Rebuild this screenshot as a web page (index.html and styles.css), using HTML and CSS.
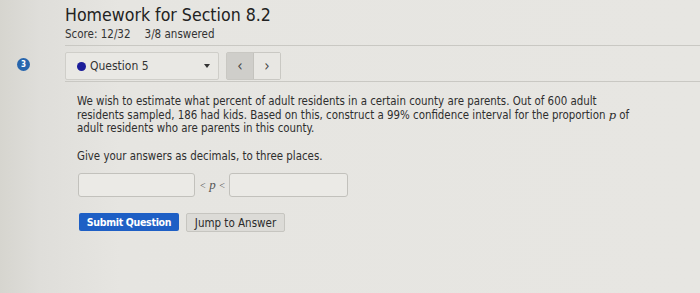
FILE: index.html
```html
<!DOCTYPE html>
<html>
<head>
<meta charset="utf-8">
<link rel="stylesheet" href="styles.css">
</head>
<body>
<div class="page">
  <header class="head">
    <h1 class="title">Homework for Section 8.2</h1>
    <div class="score"><span>Score: 12/32</span><span>3/8 answered</span></div>
  </header>
  <div class="qbar">
    <div class="gutter"><span class="badge">3</span></div>
    <div class="bar">
      <div class="select">
        <span class="dot"></span>
        <span class="qname">Question 5</span>
        <span class="caret"></span>
      </div>
      <div class="nav">
        <span class="navbtn prev">&lsaquo;</span>
        <span class="navbtn next">&rsaquo;</span>
      </div>
    </div>
  </div>
  <div class="question">
    <p class="text">We wish to estimate what percent of adult residents in a certain county are parents. Out of 600 adult<br>residents sampled, 186 had kids. Based on this, construct a 99% confidence interval for the proportion <i class="var">p</i> of<br>adult residents who are parents in this county.</p>
    <p class="text">Give your answers as decimals, to three places.</p>
    <div class="answers">
      <span class="box box1"></span>
      <span class="ineq">&lt; <i>p</i> &lt;</span>
      <span class="box box2"></span>
    </div>
    <div class="buttons">
      <span class="btn submit">Submit Question</span>
      <span class="btn jump">Jump to Answer</span>
    </div>
  </div>
</div>
</body>
</html>
```

FILE: styles.css
```css
html, body {
  margin: 0;
  height: 100%;
}
body {
  background: linear-gradient(to right, #d6d5cf 0px, #dfdeda 40px, #e6e5e1 120px, #e7e6e2 100%);
  font-family: "DejaVu Sans Condensed", "DejaVu Sans", sans-serif;
  color: #2b2b2b;
}
.page {
  width: 700px;
  height: 293px;
  overflow: hidden;
}
.head {
  padding-left: 65px;
  padding-top: 4px;
}
.title {
  margin: 0;
  font-size: 17.6px;
  font-weight: normal;
  line-height: 22px;
  color: #222;
}
.score {
  display: flex;
  gap: 14px;
  font-size: 11.5px;
  line-height: 14px;
  margin-top: 1px;
  color: #333;
}
.qbar {
  display: grid;
  grid-template-columns: 65px 1fr;
  margin-top: 4px;
}
.gutter {
  display: flex;
  align-items: center;
  padding-left: 17px;
}
.badge {
  width: 13px;
  height: 13px;
  border-radius: 50%;
  background: #2765ad;
  color: #fff;
  font-size: 8px;
  font-weight: bold;
  line-height: 13px;
  text-align: center;
  margin-top: 1px;
}
.bar {
  border-top: 1px solid #c9c8c3;
  border-bottom: 1px solid #c9c8c3;
  padding: 6px 0 1px;
  display: flex;
  gap: 7px;
}
.select {
  height: 26px;
  border: 1px solid #cfcec9;
  border-radius: 2px;
  background: #e9e8e4;
  display: flex;
  align-items: center;
  padding-left: 11px;
  width: 141px;
}
.dot {
  width: 9px;
  height: 9px;
  border-radius: 50%;
  background: #1b1d9a;
  margin-right: 4px;
}
.qname {
  font-size: 12px;
  color: #333;
}
.caret {
  margin-left: auto;
  margin-right: 8px;
  width: 0;
  height: 0;
  border-left: 3px solid transparent;
  border-right: 3px solid transparent;
  border-top: 4px solid #333;
}
.nav {
  display: flex;
  border: 1px solid #c9c8c3;
  border-radius: 2px;
  height: 26px;
}
.navbtn {
  width: 26px;
  display: flex;
  align-items: center;
  justify-content: center;
  font-size: 15px;
  color: #444;
}
.prev {
  background: #cfceca;
  border-right: 1px solid #c4c3be;
}
.next {
  background: #e8e7e3;
}
.question {
  padding-left: 77px;
  padding-top: 13px;
}
.text {
  margin: 0 0 14px;
  font-size: 11.4px;
  line-height: 13.5px;
  color: #2e2e2e;
}
.var {
  display: inline-block;
  font-family: "DejaVu Serif", serif;
  font-size: 11.5px;
  line-height: 11px;
}
.answers {
  display: flex;
  align-items: center;
  margin-top: -4px;
  margin-left: 1px;
}
.box {
  height: 22px;
  border: 1px solid #c2c1bc;
  border-radius: 3px;
  background: #ebeae6;
}
.box1 { width: 115px; }
.box2 { width: 117px; }
.ineq {
  font-family: "Liberation Serif", serif;
  font-size: 10px;
  color: #555;
  padding: 0 4px 0 5px;
}
.ineq i { font-size: 13px; padding: 0 1px; }
.buttons {
  display: flex;
  gap: 7px;
  margin-top: 16px;
  margin-left: 2px;
}
.btn {
  height: 18px;
  display: flex;
  align-items: center;
  justify-content: center;
  font-size: 11.5px;
  border-radius: 2px;
}
.submit {
  width: 100px;
  background: #1e5fc5;
  color: #fff;
  font-weight: bold;
  font-size: 10.5px;
  letter-spacing: -0.3px;
}
.jump {
  width: 97px;
  height: 17px;
  background: #dcdbd7;
  border: 1px solid #c6c5c0;
  color: #2b2b2b;
}
```
